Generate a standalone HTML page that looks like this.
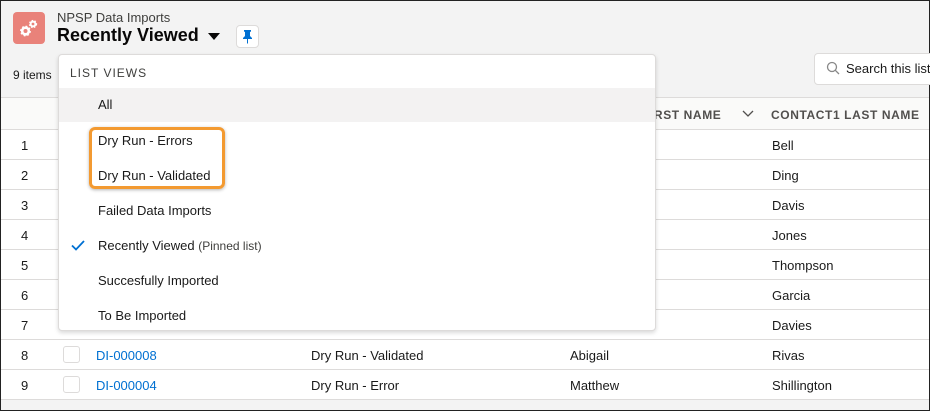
<!DOCTYPE html>
<html><head><style>
*{margin:0;padding:0;box-sizing:border-box}
body{width:930px;height:411px;overflow:hidden;background:#f3f3f3;font-family:"Liberation Sans",sans-serif;color:#16325c;position:relative;box-shadow:inset 0 0 0 1px #222}
.abs{position:absolute}
.row{position:absolute;left:1px;width:928px;height:30px;background:#fff;border-bottom:1px solid #dddbda;font-size:13px;color:#1a1a1a}
.row span{position:absolute;top:8px}
.cb{position:absolute;left:62px;top:6px;width:17px;height:17px;border:1px solid #dddbda;border-radius:3px;background:#fff}
.menu{position:absolute;left:58px;top:54px;width:598px;height:277px;background:#fff;border:1px solid #dddbda;border-radius:4px;box-shadow:0 2px 4px rgba(0,0,0,.15)}
.mi{position:absolute;left:39px;font-size:13px;color:#1a1a1a}
</style></head><body>
<div class="abs" style="left:13px;top:12px;width:32px;height:32px;background:#e9827a;border-radius:4px"></div>
<svg class="abs" style="left:13px;top:12px" width="32" height="32" viewBox="0 0 32 32"><circle cx="12.5" cy="19" r="3.3" fill="none" stroke="#fff" stroke-width="2.6"/><circle cx="12.5" cy="19" r="4.6" fill="none" stroke="#fff" stroke-width="1.6" stroke-dasharray="1.8 1.8"/><circle cx="20" cy="12" r="2.4" fill="none" stroke="#fff" stroke-width="2"/><circle cx="20" cy="12" r="3.5" fill="none" stroke="#fff" stroke-width="1.3" stroke-dasharray="1.5 1.5"/></svg>
<div class="abs" style="left:57px;top:10px;font-size:13px;color:#3e3e3c">NPSP Data Imports</div>
<div class="abs" style="left:57px;top:25px;font-size:18px;font-weight:bold;color:#080707">Recently Viewed</div>
<div class="abs" style="left:208px;top:33px;width:0;height:0;border-left:6px solid transparent;border-right:6px solid transparent;border-top:7px solid #080707"></div>
<div class="abs" style="left:236px;top:25px;width:23px;height:23px;background:#fff;border:1px solid #dddbda;border-radius:4px"></div>
<svg class="abs" style="left:241px;top:29px" width="13" height="15" viewBox="0 0 13 15"><path d="M3 1h7v1.5l-1 .5v4l2 2v1H2v-1l2-2V3l-1-.5z M6 10h1v4.5H6z" fill="#0070d2"/></svg>
<div class="abs" style="left:13px;top:68px;font-size:12px;color:#1a1a1a">9 items</div>
<div class="abs" style="left:814px;top:53px;width:130px;height:32px;background:#fff;border:1px solid #dddbda;border-radius:4px"></div>
<svg class="abs" style="left:826px;top:61px" width="14" height="14" viewBox="0 0 14 14"><circle cx="6" cy="6" r="4.5" fill="none" stroke="#888" stroke-width="1.3"/><path d="M9.3 9.3L13 13" stroke="#888" stroke-width="1.3"/></svg>
<div class="abs" style="left:846px;top:61px;font-size:13px;color:#1a1a1a;white-space:nowrap">Search this list</div>
<div class="abs" style="left:1px;top:97px;width:928px;height:33px;background:#fafaf9;border-top:1px solid #dddbda;border-bottom:1px solid #dddbda"></div>
<div class="abs" style="left:650px;top:108px;font-size:12px;font-weight:bold;color:#514f4d;letter-spacing:.6px">IRST NAME</div>
<svg class="abs" style="left:742px;top:110px" width="12" height="8" viewBox="0 0 12 8"><path d="M1 1l5 5 5-5" fill="none" stroke="#514f4d" stroke-width="1.3"/></svg>
<div class="abs" style="left:771px;top:108px;font-size:12px;font-weight:bold;color:#514f4d;letter-spacing:.6px;white-space:nowrap">CONTACT1 LAST NAME</div>
<div class="row" style="top:130px"><span style="left:20px">1</span><span style="left:771px">Bell</span></div>
<div class="row" style="top:160px"><span style="left:20px">2</span><span style="left:771px">Ding</span></div>
<div class="row" style="top:190px"><span style="left:20px">3</span><span style="left:771px">Davis</span></div>
<div class="row" style="top:220px"><span style="left:20px">4</span><span style="left:771px">Jones</span></div>
<div class="row" style="top:250px"><span style="left:20px">5</span><span style="left:771px">Thompson</span></div>
<div class="row" style="top:280px"><span style="left:20px">6</span><span style="left:771px">Garcia</span></div>
<div class="row" style="top:310px"><span style="left:20px">7</span><span style="left:771px">Davies</span></div>
<div class="row" style="top:340px"><span style="left:20px">8</span><div class="cb"></div><span style="left:95px;color:#0070d2">DI-000008</span><span style="left:310px">Dry Run - Validated</span><span style="left:569px">Abigail</span><span style="left:771px">Rivas</span></div>
<div class="row" style="top:370px"><span style="left:20px">9</span><div class="cb"></div><span style="left:95px;color:#0070d2">DI-000004</span><span style="left:310px">Dry Run - Error</span><span style="left:569px">Matthew</span><span style="left:771px">Shillington</span></div>
<div class="menu">
<div class="abs" style="left:11px;top:11px;font-size:12px;color:#3e3e3c;letter-spacing:1px">LIST VIEWS</div>
<div class="abs" style="left:0;top:33px;width:596px;height:34px;background:#f3f2f2"></div>
<div class="mi" style="top:42px">All</div>
<div class="abs" style="left:30px;top:72px;width:136px;height:62px;border:3px solid #f39a31;border-radius:6px;box-shadow:0 1px 3px rgba(0,0,0,.3)"></div>
<div class="mi" style="top:78px">Dry Run - Errors</div>
<div class="mi" style="top:113px">Dry Run - Validated</div>
<div class="mi" style="top:148px">Failed Data Imports</div>
<svg class="abs" style="left:12px;top:185px" width="14" height="11" viewBox="0 0 14 11"><path d="M1 5.5l4 4L13 1" fill="none" stroke="#0070d2" stroke-width="1.8"/></svg>
<div class="mi" style="top:183px">Recently Viewed <span style="font-size:12px;color:#3e3e3c">(Pinned list)</span></div>
<div class="mi" style="top:218px">Succesfully Imported</div>
<div class="mi" style="top:253px">To Be Imported</div>
</div>
</body></html>
